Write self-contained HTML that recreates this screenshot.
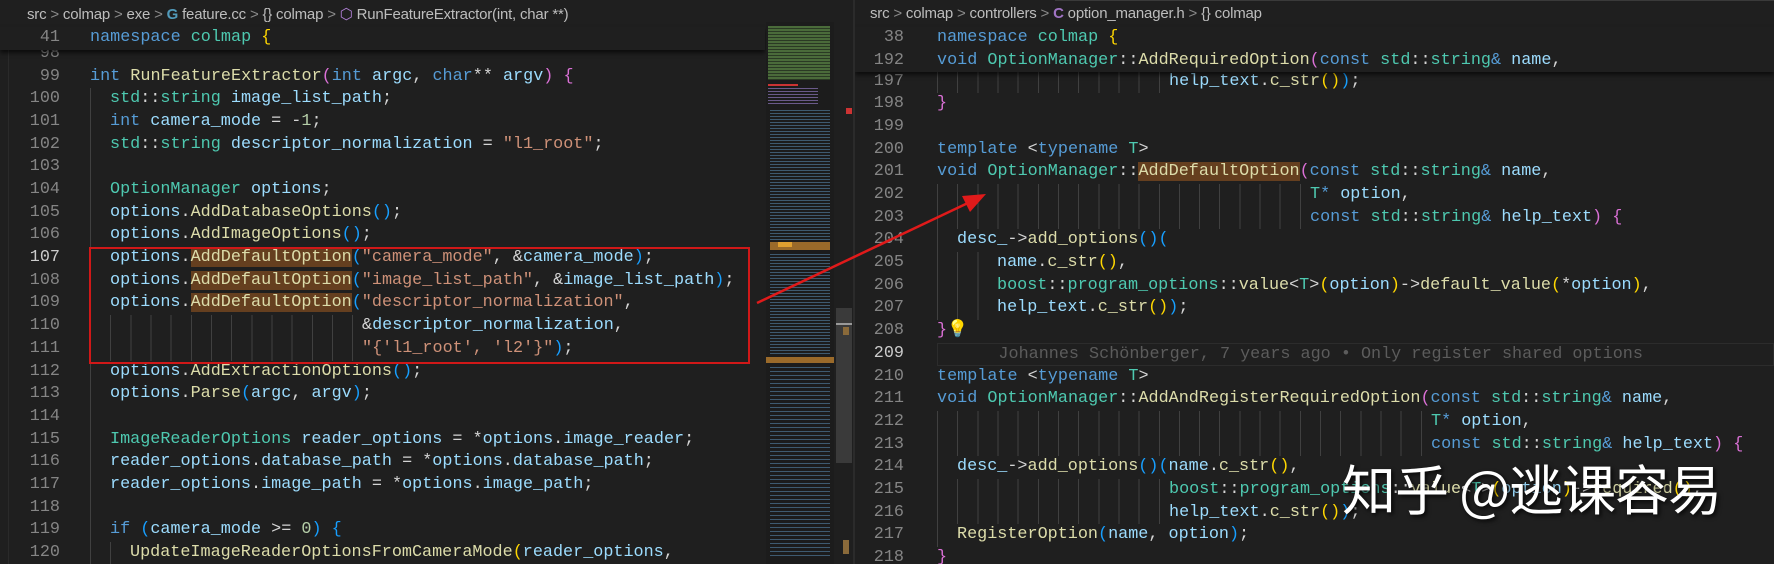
<!DOCTYPE html>
<html><head><meta charset="utf-8">
<style>
*{margin:0;padding:0;box-sizing:border-box}
body{width:1774px;height:564px;background:#1f1f1f;overflow:hidden;position:relative;font-family:"Liberation Mono",monospace;}
.pane{position:absolute;top:0;height:564px;overflow:hidden;background:#1f1f1f}
.bc{position:absolute;top:5px;font-family:"Liberation Sans",sans-serif;font-size:15px;color:#bdbdbd;white-space:pre;letter-spacing:-0.2px}
.bc .sep{color:#8a8a8a}
.lines{position:absolute;left:0;width:100%}
.ln{height:22.7px;line-height:22.7px;font-size:16.8px;white-space:pre;position:relative}
.ln .no{position:absolute;left:0;width:60px;text-align:right;color:#858585}
.ln .cd{position:absolute;white-space:pre;color:#d4d4d4}
.cur{color:#cccccc!important}
.k{color:#569cd6}.t{color:#4ec9b0}.f{color:#dcdcaa}.v{color:#9cdcfe}.s{color:#ce9178}.n{color:#b5cea8}
.b1{color:#ffd700}.b2{color:#da70d6}.b3{color:#179fff}.p{color:#d4d4d4}
.hl{background:#653f1f}
.g{display:inline-block;height:22.7px;vertical-align:top;background:repeating-linear-gradient(90deg,#404040 0 1px,transparent 1px 20.16px)}
.sticky{position:absolute;left:0;width:100%;background:#1f1f1f;box-shadow:0 3px 4px rgba(0,0,0,.6);z-index:3}
</style></head><body>

<!-- LEFT PANE -->
<div class="pane" style="left:0;width:853px">
 <div style="position:absolute;left:8px;top:30px;width:1px;height:534px;background:#2a2a2a"></div>
 <div class="bc" style="left:27px">src <span class="sep">&gt;</span> colmap <span class="sep">&gt;</span> exe <span class="sep">&gt;</span> <span style="color:#519aba;font-weight:bold">G</span> feature.cc <span class="sep">&gt;</span> {} colmap <span class="sep">&gt;</span> <span style="color:#b180d7">⬡</span> RunFeatureExtractor(int, char **)</div>

 <div class="sticky" style="top:27px;height:23px;width:765px">
  <div class="ln"><span class="no">41</span><span class="cd" style="left:90px"><span class="k">namespace</span> <span class="t">colmap</span> <span class="b1">{</span></span></div>
 </div>

 <div class="lines" style="top:42.9px">
  <div class="ln"><span class="no">98</span></div>
  <div class="ln"><span class="no">99</span><span class="cd" style="left:90px"><span class="k">int</span> <span class="f">RunFeatureExtractor</span><span class="b2">(</span><span class="k">int</span> <span class="v">argc</span>, <span class="k">char</span>** <span class="v">argv</span><span class="b2">)</span> <span class="b2">{</span></span></div>
  <div class="ln"><span class="no">100</span><span class="cd" style="left:90px"><span class="g" style="width:20px"></span><span class="t">std</span>::<span class="t">string</span> <span class="v">image_list_path</span>;</span></div>
  <div class="ln"><span class="no">101</span><span class="cd" style="left:90px"><span class="g" style="width:20px"></span><span class="k">int</span> <span class="v">camera_mode</span> = -<span class="n">1</span>;</span></div>
  <div class="ln"><span class="no">102</span><span class="cd" style="left:90px"><span class="g" style="width:20px"></span><span class="t">std</span>::<span class="t">string</span> <span class="v">descriptor_normalization</span> = <span class="s">"l1_root"</span>;</span></div>
  <div class="ln"><span class="no">103</span><span class="cd" style="left:90px"><span class="g" style="width:20px"></span></span></div>
  <div class="ln"><span class="no">104</span><span class="cd" style="left:90px"><span class="g" style="width:20px"></span><span class="t">OptionManager</span> <span class="v">options</span>;</span></div>
  <div class="ln"><span class="no">105</span><span class="cd" style="left:90px"><span class="g" style="width:20px"></span><span class="v">options</span>.<span class="f">AddDatabaseOptions</span><span class="b3">()</span>;</span></div>
  <div class="ln"><span class="no">106</span><span class="cd" style="left:90px"><span class="g" style="width:20px"></span><span class="v">options</span>.<span class="f">AddImageOptions</span><span class="b3">()</span>;</span></div>
  <div class="ln"><span class="no cur">107</span><span class="cd" style="left:90px"><span class="g" style="width:20px"></span><span class="v">options</span>.<span class="f hl">AddDefaultOption</span><span class="b3">(</span><span class="s">"camera_mode"</span>, &amp;<span class="v">camera_mode</span><span class="b3">)</span>;</span></div>
  <div class="ln"><span class="no">108</span><span class="cd" style="left:90px"><span class="g" style="width:20px"></span><span class="v">options</span>.<span class="f hl">AddDefaultOption</span><span class="b3">(</span><span class="s">"image_list_path"</span>, &amp;<span class="v">image_list_path</span><span class="b3">)</span>;</span></div>
  <div class="ln"><span class="no">109</span><span class="cd" style="left:90px"><span class="g" style="width:20px"></span><span class="v">options</span>.<span class="f hl">AddDefaultOption</span><span class="b3">(</span><span class="s">"descriptor_normalization"</span>,</span></div>
  <div class="ln"><span class="no">110</span><span class="cd" style="left:90px"><span class="g" style="width:272px"></span>&amp;<span class="v">descriptor_normalization</span>,</span></div>
  <div class="ln"><span class="no">111</span><span class="cd" style="left:90px"><span class="g" style="width:272px"></span><span class="s">"{'l1_root', 'l2'}"</span><span class="b3">)</span>;</span></div>
  <div class="ln"><span class="no">112</span><span class="cd" style="left:90px"><span class="g" style="width:20px"></span><span class="v">options</span>.<span class="f">AddExtractionOptions</span><span class="b3">()</span>;</span></div>
  <div class="ln"><span class="no">113</span><span class="cd" style="left:90px"><span class="g" style="width:20px"></span><span class="v">options</span>.<span class="f">Parse</span><span class="b3">(</span><span class="v">argc</span>, <span class="v">argv</span><span class="b3">)</span>;</span></div>
  <div class="ln"><span class="no">114</span><span class="cd" style="left:90px"><span class="g" style="width:20px"></span></span></div>
  <div class="ln"><span class="no">115</span><span class="cd" style="left:90px"><span class="g" style="width:20px"></span><span class="t">ImageReaderOptions</span> <span class="v">reader_options</span> = *<span class="v">options</span>.<span class="v">image_reader</span>;</span></div>
  <div class="ln"><span class="no">116</span><span class="cd" style="left:90px"><span class="g" style="width:20px"></span><span class="v">reader_options</span>.<span class="v">database_path</span> = *<span class="v">options</span>.<span class="v">database_path</span>;</span></div>
  <div class="ln"><span class="no">117</span><span class="cd" style="left:90px"><span class="g" style="width:20px"></span><span class="v">reader_options</span>.<span class="v">image_path</span> = *<span class="v">options</span>.<span class="v">image_path</span>;</span></div>
  <div class="ln"><span class="no">118</span><span class="cd" style="left:90px"><span class="g" style="width:20px"></span></span></div>
  <div class="ln"><span class="no">119</span><span class="cd" style="left:90px"><span class="g" style="width:20px"></span><span class="k">if</span> <span class="b3">(</span><span class="v">camera_mode</span> &gt;= <span class="n">0</span><span class="b3">)</span> <span class="b3">{</span></span></div>
  <div class="ln"><span class="no">120</span><span class="cd" style="left:90px"><span class="g" style="width:40px"></span><span class="f">UpdateImageReaderOptionsFromCameraMode</span><span class="b1">(</span><span class="v">reader_options</span>,</span></div>
 </div>

 <!-- minimap -->
 <div style="position:absolute;left:766px;top:22px;width:68px;height:542px;background:#1c1c1c;z-index:4;overflow:hidden">
  <div style="position:absolute;left:2px;top:4px;width:62px;height:54px;background:repeating-linear-gradient(180deg,#4a6b3a 0 2px,#2a3a24 2px 3px)"></div>
  <div style="position:absolute;left:2px;top:62px;width:30px;height:2px;background:#c33"></div>
  <div style="position:absolute;left:2px;top:66px;width:50px;height:16px;background:repeating-linear-gradient(180deg,#6a5a8a 0 1px,transparent 1px 3px)"></div>
  <div style="position:absolute;left:4px;top:88px;width:60px;height:130px;background:repeating-linear-gradient(180deg,#3e5a70 0 1px,transparent 1px 3px)"></div>
  <div style="position:absolute;left:4px;top:220px;width:60px;height:8px;background:#9a6a2a"></div>
  <div style="position:absolute;left:12px;top:220px;width:14px;height:5px;background:#e0a030"></div>
  <div style="position:absolute;left:4px;top:232px;width:60px;height:100px;background:repeating-linear-gradient(180deg,#3e5a70 0 1px,transparent 1px 3px)"></div>
  <div style="position:absolute;left:0px;top:335px;width:68px;height:6px;background:#9a6a2a"></div>
  <div style="position:absolute;left:4px;top:345px;width:60px;height:190px;background:repeating-linear-gradient(180deg,#3e5a70 0 1px,transparent 1px 4px)"></div>
 </div>
 <div style="position:absolute;left:834px;top:22px;width:18px;height:542px;background:#1f1f1f;z-index:4"></div>
 <div style="position:absolute;left:836px;top:308px;width:16px;height:155px;background:#3a3a3a;z-index:5"></div>
 <div style="position:absolute;left:836px;top:323px;width:16px;height:2px;background:#999;z-index:6"></div>
 <div style="position:absolute;left:843px;top:327px;width:6px;height:8px;background:#8a6a3a;z-index:6"></div>
 <div style="position:absolute;left:846px;top:108px;width:6px;height:6px;background:#c33;z-index:6"></div>
 <div style="position:absolute;left:843px;top:540px;width:6px;height:14px;background:#8a6a3a;z-index:6"></div>
</div>
<div style="position:absolute;left:853px;top:0;width:2px;height:564px;background:#2b2b2b"></div>

<!-- RIGHT PANE -->
<div class="pane" style="left:855px;width:919px">
 <div style="position:absolute;left:200px;top:0;width:719px;height:1px;background:#3a3a3a"></div>
 <div class="bc" style="left:15px">src <span class="sep">&gt;</span> colmap <span class="sep">&gt;</span> controllers <span class="sep">&gt;</span> <span style="color:#a074c4;font-weight:bold">C</span> option_manager.h <span class="sep">&gt;</span> {} colmap</div>

 <div class="sticky" style="top:27px;height:45.4px">
  <div class="ln"><span class="no" style="width:49px">38</span><span class="cd" style="left:82px"><span class="k">namespace</span> <span class="t">colmap</span> <span class="b1">{</span></span></div>
  <div class="ln"><span class="no" style="width:49px">192</span><span class="cd" style="left:82px"><span class="k">void</span> <span class="t">OptionManager</span>::<span class="f">AddRequiredOption</span><span class="b2">(</span><span class="k">const</span> <span class="t">std</span>::<span class="t">string</span><span class="k">&amp;</span> <span class="v">name</span>,</span></div>
 </div>

 <div class="lines" style="top:25.2px">
  <div class="ln"><span class="no" style="width:49px">195</span></div>
  <div class="ln"><span class="no" style="width:49px">196</span></div>
  <div class="ln"><span class="no" style="width:49px">197</span><span class="cd" style="left:82px"><span class="g" style="width:232px"></span><span class="v">help_text</span>.<span class="f">c_str</span><span class="b1">()</span><span class="b3">)</span>;</span></div>
  <div class="ln"><span class="no" style="width:49px">198</span><span class="cd" style="left:82px"><span class="b2">}</span></span></div>
  <div class="ln"><span class="no" style="width:49px">199</span></div>
  <div class="ln"><span class="no" style="width:49px">200</span><span class="cd" style="left:82px"><span class="k">template</span> &lt;<span class="k">typename</span> <span class="t">T</span>&gt;</span></div>
  <div class="ln"><span class="no" style="width:49px">201</span><span class="cd" style="left:82px"><span class="k">void</span> <span class="t">OptionManager</span>::<span class="f hl">AddDefaultOption</span><span class="b2">(</span><span class="k">const</span> <span class="t">std</span>::<span class="t">string</span><span class="k">&amp;</span> <span class="v">name</span>,</span></div>
  <div class="ln"><span class="no" style="width:49px">202</span><span class="cd" style="left:82px"><span class="g" style="width:373px"></span><span class="t">T</span><span class="k">*</span> <span class="v">option</span>,</span></div>
  <div class="ln"><span class="no" style="width:49px">203</span><span class="cd" style="left:82px"><span class="g" style="width:373px"></span><span class="k">const</span> <span class="t">std</span>::<span class="t">string</span><span class="k">&amp;</span> <span class="v">help_text</span><span class="b2">)</span> <span class="b2">{</span></span></div>
  <div class="ln"><span class="no" style="width:49px">204</span><span class="cd" style="left:82px"><span class="g" style="width:20px"></span><span class="v">desc_</span>-&gt;<span class="f">add_options</span><span class="b3">()(</span></span></div>
  <div class="ln"><span class="no" style="width:49px">205</span><span class="cd" style="left:82px"><span class="g" style="width:60px"></span><span class="v">name</span>.<span class="f">c_str</span><span class="b1">()</span>,</span></div>
  <div class="ln"><span class="no" style="width:49px">206</span><span class="cd" style="left:82px"><span class="g" style="width:60px"></span><span class="t">boost</span>::<span class="t">program_options</span>::<span class="f">value</span>&lt;<span class="t">T</span>&gt;<span class="b1">(</span><span class="v">option</span><span class="b1">)</span>-&gt;<span class="f">default_value</span><span class="b1">(</span>*<span class="v">option</span><span class="b1">)</span>,</span></div>
  <div class="ln"><span class="no" style="width:49px">207</span><span class="cd" style="left:82px"><span class="g" style="width:60px"></span><span class="v">help_text</span>.<span class="f">c_str</span><span class="b1">()</span><span class="b3">)</span>;</span></div>
  <div class="ln"><span class="no" style="width:49px">208</span><span class="cd" style="left:82px"><span class="b2">}</span><span style="color:#ffcc00">💡</span></span></div>
  <div class="ln"><span class="no cur" style="width:49px">209</span><span class="cd" style="left:82px;width:837px;height:22.7px;border:1px solid #2c2c2c;color:#5c5c5c">      Johannes Schönberger, 7 years ago • Only register shared options</span></div>
  <div class="ln"><span class="no" style="width:49px">210</span><span class="cd" style="left:82px"><span class="k">template</span> &lt;<span class="k">typename</span> <span class="t">T</span>&gt;</span></div>
  <div class="ln"><span class="no" style="width:49px">211</span><span class="cd" style="left:82px"><span class="k">void</span> <span class="t">OptionManager</span>::<span class="f">AddAndRegisterRequiredOption</span><span class="b2">(</span><span class="k">const</span> <span class="t">std</span>::<span class="t">string</span><span class="k">&amp;</span> <span class="v">name</span>,</span></div>
  <div class="ln"><span class="no" style="width:49px">212</span><span class="cd" style="left:82px"><span class="g" style="width:494px"></span><span class="t">T</span><span class="k">*</span> <span class="v">option</span>,</span></div>
  <div class="ln"><span class="no" style="width:49px">213</span><span class="cd" style="left:82px"><span class="g" style="width:494px"></span><span class="k">const</span> <span class="t">std</span>::<span class="t">string</span><span class="k">&amp;</span> <span class="v">help_text</span><span class="b2">)</span> <span class="b2">{</span></span></div>
  <div class="ln"><span class="no" style="width:49px">214</span><span class="cd" style="left:82px"><span class="g" style="width:20px"></span><span class="v">desc_</span>-&gt;<span class="f">add_options</span><span class="b3">()(</span><span class="v">name</span>.<span class="f">c_str</span><span class="b1">()</span>,</span></div>
  <div class="ln"><span class="no" style="width:49px">215</span><span class="cd" style="left:82px"><span class="g" style="width:232px"></span><span class="t">boost</span>::<span class="t">program_options</span>::<span class="f">value</span>&lt;<span class="t">T</span>&gt;<span class="b1">(</span><span class="v">option</span><span class="b1">)</span>-&gt;<span class="f">required</span><span class="b1">()</span>,</span></div>
  <div class="ln"><span class="no" style="width:49px">216</span><span class="cd" style="left:82px"><span class="g" style="width:232px"></span><span class="v">help_text</span>.<span class="f">c_str</span><span class="b1">()</span><span class="b3">)</span>;</span></div>
  <div class="ln"><span class="no" style="width:49px">217</span><span class="cd" style="left:82px"><span class="g" style="width:20px"></span><span class="f">RegisterOption</span><span class="b3">(</span><span class="v">name</span>, <span class="v">option</span><span class="b3">)</span>;</span></div>
  <div class="ln"><span class="no" style="width:49px">218</span><span class="cd" style="left:82px"><span class="b2">}</span></span></div>
 </div>
</div>

<!-- red box & arrow -->
<div style="position:absolute;left:89px;top:247px;width:661px;height:117px;border:2px solid #d01818;z-index:8"></div>
<svg style="position:absolute;left:0;top:0;z-index:9" width="1774" height="564">
 <line x1="757" y1="303" x2="970" y2="202" stroke="#e01a1a" stroke-width="2.5"/>
 <polygon points="986,194 962,196 970,212" fill="#e01a1a"/>
</svg>

<!-- watermark -->
<div style="position:absolute;left:1342px;top:452px;font-family:'Noto Sans CJK SC','WenQuanYi Zen Hei',sans-serif;font-size:54px;line-height:70px;color:#fff;white-space:pre;z-index:10;text-shadow:2px 2px 4px rgba(0,0,0,.8);letter-spacing:-1px">知乎 @逃课容易</div>
</body></html>
